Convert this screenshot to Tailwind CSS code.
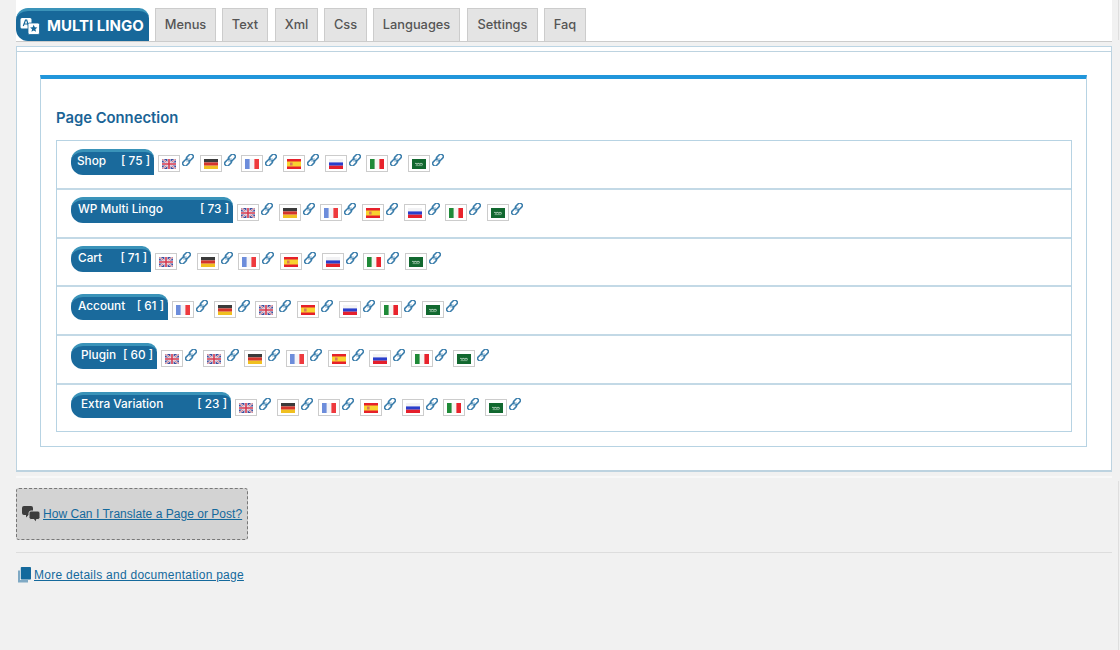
<!DOCTYPE html>
<html lang="en">
<head>
    <meta charset="UTF-8">
    <title>Multi Lingo - Page Connection</title>
    <script src="https://cdn.jsdelivr.net/npm/@tailwindcss/browser@4"></script>
</head>
<body class="relative bg-[#f1f1f1] h-[650px] overflow-hidden font-['Inter','Liberation_Sans',sans-serif]">

    <!-- shared flag + icon symbols -->
    <svg class="hidden">
        <symbol id="gb" viewBox="0 0 14 10">
            <rect width="14" height="10" fill="#3d4f9f"/>
            <path d="M0 0L14 10M14 0L0 10" stroke="#e8e4ec" stroke-width="2"/>
            <path d="M0 0L14 10M14 0L0 10" stroke="#d0505f" stroke-width=".7"/>
            <path d="M7 0V10M0 5H14" stroke="#f1e9ee" stroke-width="3.2"/>
            <path d="M7 0V10M0 5H14" stroke="#d43a50" stroke-width="1.6"/>
        </symbol>
        <symbol id="de" viewBox="0 0 14 10">
            <rect width="14" height="3.4" fill="#3a3a3a"/>
            <rect y="3.4" width="14" height="3.3" fill="#d4352c"/>
            <rect y="6.7" width="14" height="3.3" fill="#f0c020"/>
        </symbol>
        <symbol id="fr" viewBox="0 0 14 10">
            <rect width="5" height="10" fill="#6d8ddb"/>
            <rect x="4.600" width="5" height="10" fill="#f4f4f8"/>
            <rect x="9.400" width="4.600" height="10" fill="#ee3a3e"/>
        </symbol>
        <symbol id="es" viewBox="0 0 14 10">
            <rect width="14" height="10" fill="#e6202a"/>
            <rect y="2.500" width="14" height="5" fill="#f8d330"/>
            <rect x="3" y="3.500" width="2.600" height="3" fill="#d9785a"/>
        </symbol>
        <symbol id="ru" viewBox="0 0 14 10">
            <rect width="14" height="3.400" fill="#f2f2f4"/>
            <rect y="3.400" width="14" height="3.300" fill="#2a3ecb"/>
            <rect y="6.700" width="14" height="3.300" fill="#e5202c"/>
        </symbol>
        <symbol id="it" viewBox="0 0 14 10">
            <rect width="5" height="10" fill="#1f8a38"/>
            <rect x="4.600" width="5" height="10" fill="#f6f6f2"/>
            <rect x="9.400" width="4.600" height="10" fill="#e8232c"/>
        </symbol>
        <symbol id="sa" viewBox="0 0 14 10">
            <rect width="14" height="10" fill="#11682f"/>
            <path d="M3 4.400h1.400v.8h1.200v-.8h1.600v.8h1.200v-.8h1.400v.8h1.200" fill="none" stroke="#dfeee2" stroke-width=".7"/>
            <path d="M3.600 6.600H10.400" stroke="#cfe4d4" stroke-width=".5"/>
        </symbol>
        <symbol id="chain" viewBox="0 0 12 12">
            <g fill="none" stroke="#3a7dab" stroke-width="1.500">
                <rect x="4.200" y="1.100" width="7.400" height="4.800" rx="2.200" transform="rotate(-45 7.900 3.500)"/>
                <rect x=".4" y="6.100" width="7.400" height="4.800" rx="2.200" transform="rotate(-45 4.100 8.500)"/>
                <path d="M4.400 7.600L7.600 4.400" stroke="#a9c8dc" stroke-width="1.200"/>
            </g>
        </symbol>
    </svg>

    <!-- window edge lines beside the panel -->
    <div class="absolute left-[1118px] top-0 w-px h-[40px] bg-[#dedede]"></div>
    <div class="absolute left-[1118px] top-[481px] w-px h-[169px] bg-[#dedede]"></div>

    <div class="w-[1096px] ml-[16px]">

        <!-- tabs -->
        <div class="flex items-start h-[42px] pt-[8px] bg-white border-b border-[#cccccc]">
            <div class="flex items-center gap-[7px] w-[133px] h-[33px] pl-[4px] rounded-tl-[12px] rounded-tr-[10px] rounded-bl-[12px] bg-[#17689a] border-t-[3px] border-[#3a93b9] text-white font-bold text-[15px] whitespace-nowrap mr-[6px]">
                <svg class="w-[20px] h-[18px] shrink-0" viewBox="0 0 20 18">
                    <path d="M2 1h8a1.500 1.500 0 0 1 1.500 1.500V10a1.500 1.500 0 0 1-1.500 1.500H2A1.500 1.500 0 0 1 .5 10V2.500A1.500 1.500 0 0 1 2 1z" fill="#fff"/>
                    <path d="M3.300 9L5.500 3h1.200l1.900 6M4.200 7h3.600" fill="none" stroke="#17689a" stroke-width="1.200"/>
                    <rect x="8" y="6" width="11.500" height="11.500" rx="1.500" fill="#fff" stroke="#17689a" stroke-width=".8"/>
                    <path d="M13.700 7.800l1.100 2.500 2.600.2-2 1.700.7 2.600-2.400-1.400-2.300 1.400.7-2.600-2-1.700 2.500-.2z" fill="#17689a"/>
                </svg>
                <span>MULTI LINGO</span>
            </div>
            <div class="flex gap-[6px] text-[12.800px] font-medium text-[#555555] whitespace-nowrap">
                <a class="flex items-center justify-center w-[61px] h-[33px] bg-[#e4e4e4] border border-b-0 border-[#cccccc]">Menus</a>
                <a class="flex items-center justify-center w-[46px] h-[33px] bg-[#e4e4e4] border border-b-0 border-[#cccccc]">Text</a>
                <a class="flex items-center justify-center w-[43px] h-[33px] bg-[#e4e4e4] border border-b-0 border-[#cccccc] ml-[1px]">Xml</a>
                <a class="flex items-center justify-center w-[43px] h-[33px] bg-[#e4e4e4] border border-b-0 border-[#cccccc]">Css</a>
                <a class="flex items-center justify-center w-[87px] h-[33px] bg-[#e4e4e4] border border-b-0 border-[#cccccc]">Languages</a>
                <a class="flex items-center justify-center w-[71px] h-[33px] bg-[#e4e4e4] border border-b-0 border-[#cccccc] ml-[1px]">Settings</a>
                <a class="flex items-center justify-center w-[42px] h-[33px] bg-[#e4e4e4] border border-b-0 border-[#cccccc]">Faq</a>
            </div>
        </div>

        <!-- main panel -->
        <div class="mt-[4px] pt-[4px] border-t border-r border-l border-[#bcd5e4] bg-white"></div>
        <div class="h-[421px] border border-b-2 border-[#bdd3e0] bg-white pl-[23px] pr-[24px] pt-[23px]">
            <div class="h-[372px] border border-t-[4px] border-[#b7d3e3] border-t-[#2196db] px-[15px]">
                <h2 class="pt-[29px] text-[14.800px] leading-[20px] font-semibold text-[#1a6496]">Page Connection</h2>
                <div id="rows" class="mt-[12px] w-[1016px] border border-[#b7d3e3]"></div>
            </div>
        </div>
        <div class="mt-[4px] h-[2px] bg-[#f8f8f8]"></div>

        <!-- help box -->
        <div class="mt-[10px] w-[232px] h-[52px] flex items-center gap-[3px] pl-[5px] bg-[#d3d3d3] border border-dashed border-[#777777] rounded-[3px]">
            <svg class="w-[18px] h-[17px] shrink-0" viewBox="0 0 18 17" fill="#3d3d3d">
                <path d="M2 0h7a2 2 0 0 1 2 2v5a2 2 0 0 1-2 2H6.500L4 11.500V9H2a2 2 0 0 1-2-2V2a2 2 0 0 1 2-2z"/>
                <path d="M9 5h7a2 2 0 0 1 2 2v4.500a2 2 0 0 1-2 2h-1.500V17L12 13.500H9a2 2 0 0 1-2-2V7a2 2 0 0 1 2-2z" stroke="#d3d3d3" stroke-width="1"/>
            </svg>
            <a class="font-['Liberation_Sans',sans-serif] text-[12px] tracking-[0.03px] text-[#14699c] underline whitespace-nowrap">How Can I Translate a Page or Post?</a>
        </div>

        <div class="mt-[12px] h-px bg-[#dddddd]"></div>

        <div class="mt-[13px] flex items-center gap-[3px] pl-[2px]">
            <svg class="w-[13px] h-[16px] shrink-0" viewBox="0 0 13 16">
                <path d="M0 3.500h2V13h8v2.500H0z" fill="#7fa9c4"/>
                <rect x="2.800" y="0" width="10.200" height="12.500" rx=".8" fill="#14699c"/>
            </svg>
            <a class="font-['Liberation_Sans',sans-serif] text-[12px] tracking-[0.26px] text-[#14699c] underline whitespace-nowrap">More details and documentation page</a>
        </div>
    </div>

    <script>
        // page rows: name, id, pill width, name indent, flags in display order
        const STD = ['gb', 'de', 'fr', 'es', 'ru', 'it', 'sa'];
        const PAGES = [
            { name: 'Shop', id: 75, width: 83, indent: 6, height: 47, flags: STD },
            { name: 'WP Multi Lingo', id: 73, width: 162, indent: 7, height: 49, flags: STD },
            { name: 'Cart', id: 71, width: 80, indent: 7, height: 48, flags: STD },
            { name: 'Account', id: 61, width: 97, indent: 7, height: 49, flags: ['fr', 'de', 'gb', 'es', 'ru', 'it', 'sa'] },
            { name: 'Plugin', id: 60, width: 86, indent: 10, height: 49, flags: ['gb', 'gb', 'de', 'fr', 'es', 'ru', 'it', 'sa'] },
            { name: 'Extra Variation', id: 23, width: 160, indent: 10, height: 48, flags: STD },
        ];

        document.getElementById('rows').innerHTML = PAGES.map((page, i) => `
            <div class="flex items-start pl-[14px] ${i ? 'border-t-2 border-[#c3d9e6]' : ''}" style="height:${page.height}px">
                <div class="flex items-center justify-between shrink-0 h-[26px] ${i ? 'mt-[7px]' : 'mt-[8px]'} pb-[4px] pr-[4px] rounded-tl-[12px] rounded-tr-[9px] rounded-bl-[12px] bg-[#1a6a9c] border-t-[3px] border-[#3a93b9] text-white text-[11.800px] font-medium whitespace-nowrap" style="width:${page.width}px;padding-left:${page.indent}px">
                    <span>${page.name}</span><span>[ ${page.id} ]</span>
                </div>
                <div class="flex ml-[4px]">
                    ${page.flags.map(f => `
                        <div class="flex w-[41.700px] shrink-0">
                            <div class="flex items-center justify-center w-[22px] h-[17px] mt-[14px] bg-white border border-[#cccccc]">
                                <svg class="w-[14px] h-[10px] blur-[0.4px]"><use href="#${f}"/></svg>
                            </div>
                            <svg class="w-[12px] h-[12px] ml-[2px] mt-[13px]"><use href="#chain"/></svg>
                        </div>`).join('')}
                </div>
            </div>`).join('');
    </script>
</body>
</html>
